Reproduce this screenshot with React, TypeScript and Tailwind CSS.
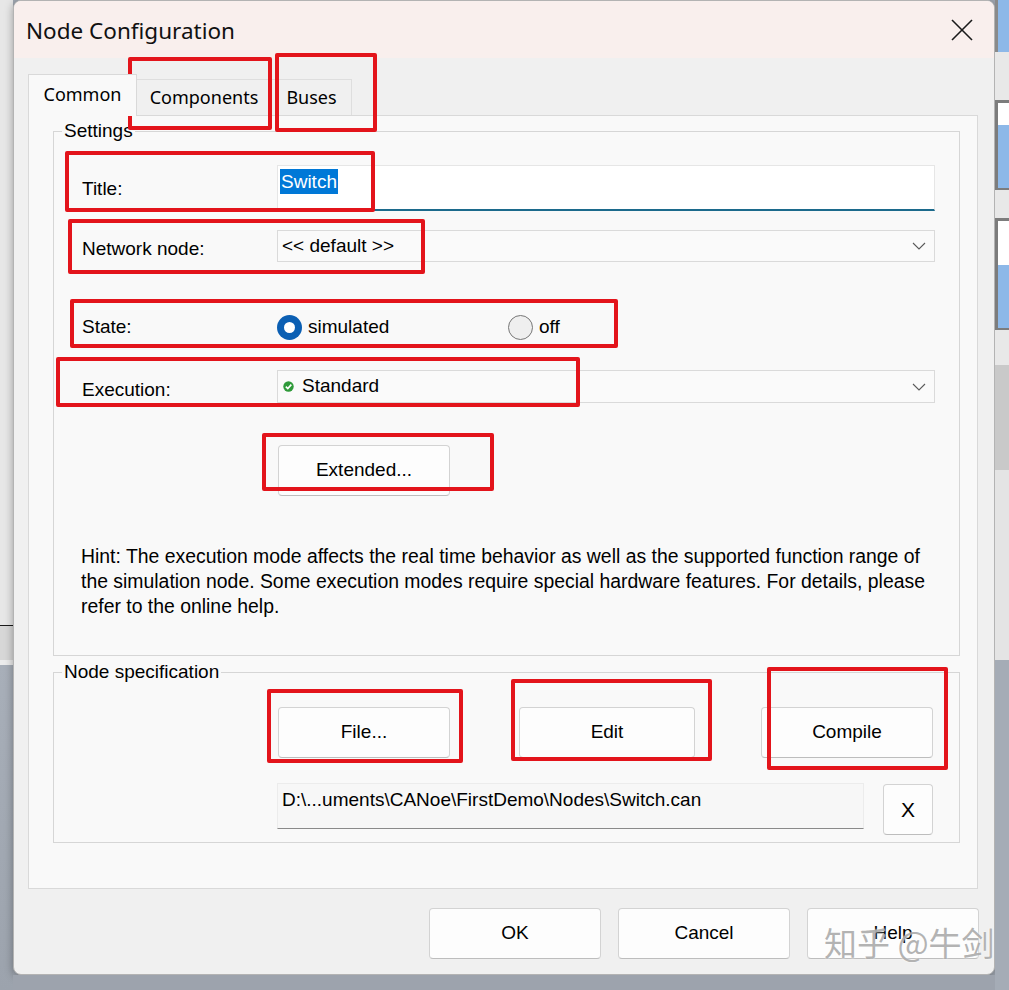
import React from 'react';

const redBoxes = [
  { l: 128, t: 57, w: 144, h: 73 },
  { l: 275, t: 53, w: 102, h: 79 },
  { l: 65, t: 151, w: 310, h: 61 },
  { l: 68, t: 219, w: 357, h: 55 },
  { l: 70, t: 299, w: 548, h: 49 },
  { l: 56, t: 357, w: 524, h: 50 },
  { l: 262, t: 433, w: 232, h: 58 },
  { l: 267, t: 689, w: 196, h: 74 },
  { l: 511, t: 679, w: 201, h: 82 },
  { l: 767, t: 667, w: 181, h: 103 },
];

function Chevron() {
  return (
    <svg width="14" height="8" viewBox="0 0 14 8" fill="none">
      <polyline points="1,1 7,7 13,1" stroke="#5a5a5a" strokeWidth="1.1" />
    </svg>
  );
}

function GreenCheck() {
  return (
    <svg width="11" height="11" viewBox="0 0 11 11">
      <circle cx="5.5" cy="5.5" r="5.2" fill="#2f9a3a" />
      <polyline points="2.8,5.6 4.8,7.6 8.3,3.6" fill="none" stroke="#fff" strokeWidth="1.6" />
    </svg>
  );
}

function WinButton({ label, width, className = '' }: { label: string; width: string; className?: string }) {
  return (
    <div
      className={`${width} h-[51px] flex items-center justify-center rounded-[4px] bg-[#fdfdfd] border border-[#d3d3d3] border-b-[#bdbdbd] text-[19px] text-black ${className}`}
    >
      {label}
    </div>
  );
}

export default function App() {
  return (
    <div className="relative w-[1009px] h-[990px] overflow-hidden flex bg-[#a1a8b2] font-['Liberation_Sans',Arial,sans-serif]">
      {/* Left desktop strip */}
      <div className="w-[13px] flex flex-col shrink-0">
        <div className="h-[625px] bg-[#e7e7e7]" />
        <div className="h-[1px] bg-[#1a1a1a]" />
        <div className="h-[34px] bg-[#d7d7d7]" />
        <div className="h-[5px] bg-[#ececec]" />
        <div className="flex-1 bg-gradient-to-b from-[#a8afb9] to-[#9ca3ad]" />
      </div>

      {/* Dialog column */}
      <div className="w-[982px] flex flex-col shrink-0">
        <div className="h-[975px] flex flex-col rounded-[8px] overflow-hidden border border-[#b3b3b3] bg-[#f0f0f0] shadow-[0_2px_8px_rgba(0,0,0,0.35)]">
          {/* Title bar */}
          <div className="h-[57px] shrink-0 bg-[#f9efed] flex items-center justify-between pl-[12px] pr-[21px]">
            <span className="font-['Noto_Sans',sans-serif] text-[22.5px] text-[#111] pt-[2px]">Node Configuration</span>
            <svg width="22" height="22" viewBox="0 0 22 22" fill="none">
              <line x1="1" y1="1" x2="21" y2="21" stroke="#1a1a1a" strokeWidth="1.6" />
              <line x1="21" y1="1" x2="1" y2="21" stroke="#1a1a1a" strokeWidth="1.6" />
            </svg>
          </div>

          {/* Body */}
          <div className="flex-1 flex flex-col pl-[14px] pt-[16px]">
            {/* Tabs */}
            <div className="flex items-end h-[41px] font-['Noto_Sans',sans-serif] text-[18px] text-black">
              <div className="relative z-10 w-[109px] h-[42px] -mb-px bg-[#f9f9f9] border border-b-0 border-[#d9d9d9] flex items-center justify-center pb-[3px]">
                Common
              </div>
              <div className="w-[135px] h-[36px] bg-[#f0f0f0] border-t border-r border-[#dedede] flex items-center justify-center">
                Components
              </div>
              <div className="w-[80px] h-[36px] bg-[#f0f0f0] border-t border-r border-[#dedede] flex items-center justify-center">
                Buses
              </div>
            </div>

            {/* Tab panel */}
            <div className="w-[950px] h-[774px] bg-[#f9f9f9] border border-[#d9d9d9] px-[24px] pt-[4px] text-[19px] text-black">
              <fieldset className="border border-[#d6d6d6] w-[907px]">
                <legend className="ml-[8px] px-[2px] leading-[22px]">Settings</legend>

                <div className="pt-[23px] pl-[28px] pr-[24px] pb-[36px] flex flex-col">
                  {/* Title */}
                  <div className="h-[46px] flex items-center">
                    <span className="w-[195px] pt-[2px]">Title:</span>
                    <div className="w-[658px] h-[46px] bg-white border border-[#e6e6e6] border-b-2 border-b-[#1c6a8c] pl-[2px] pt-[2px]">
                      <span className="inline-block px-[1px] leading-[25px] bg-[#0078d7] text-white">Switch</span>
                    </div>
                  </div>

                  {/* Network node */}
                  <div className="mt-[19px] h-[32px] flex items-center">
                    <span className="w-[195px] pt-[7px]">Network node:</span>
                    <div className="w-[658px] h-[32px] bg-[#fafafa] border border-[#dadada] flex items-center justify-between pl-[4px] pr-[8px]">
                      <span>&lt;&lt; default &gt;&gt;</span>
                      <Chevron />
                    </div>
                  </div>

                  {/* State */}
                  <div className="mt-[49px] h-[32px] flex items-center">
                    <span className="w-[195px]">State:</span>
                    <div className="flex items-center">
                      <div className="w-[25px] h-[25px] rounded-full bg-[#0b5fb3] flex items-center justify-center">
                        <div className="w-[11px] h-[11px] rounded-full bg-white" />
                      </div>
                      <span className="ml-[6px] w-[200px]">simulated</span>
                      <div className="w-[25px] h-[25px] rounded-full border-[1.5px] border-[#777] bg-[#efefef]" />
                      <span className="ml-[6px]">off</span>
                    </div>
                  </div>

                  {/* Execution */}
                  <div className="mt-[27px] h-[33px] flex items-center">
                    <span className="w-[195px] pt-[7px]">Execution:</span>
                    <div className="w-[658px] h-[33px] bg-[#fafafa] border border-[#dadada] flex items-center justify-between pl-[5px] pr-[8px]">
                      <div className="flex items-center gap-[8px]">
                        <GreenCheck />
                        <span>Standard</span>
                      </div>
                      <Chevron />
                    </div>
                  </div>

                  <WinButton label="Extended..." width="w-[172px]" className="mt-[42px] ml-[196px] h-[50px]" />

                  <p className="mt-[48px] -ml-[1px] text-[19.4px] leading-[25px] whitespace-nowrap">
                    Hint: The execution mode affects the real time behavior as well as the supported function range of
                    <br />
                    the simulation node. Some execution modes require special hardware features. For details, please
                    <br />
                    refer to the online help.
                  </p>
                </div>
              </fieldset>

              <fieldset className="mt-[5px] border border-[#d6d6d6] w-[907px]">
                <legend className="ml-[8px] px-[2px] leading-[22px]">Node specification</legend>
                <div className="pt-[24px] pl-[28px] pr-[24px] pb-[7px] flex flex-col">
                  <div className="flex items-center">
                    <WinButton label="File..." width="w-[172px]" className="ml-[196px]" />
                    <WinButton label="Edit" width="w-[176px]" className="ml-[69px]" />
                    <WinButton label="Compile" width="w-[172px]" className="ml-[66px]" />
                  </div>
                  <div className="mt-[25px] flex items-start">
                    <div className="ml-[195px] w-[587px] h-[46px] bg-[#f7f7f7] border border-[#ececec] border-b-[#8a8a8a] pl-[4px] pt-[3px] leading-[25px]">
                      {'D:\\...uments\\CANoe\\FirstDemo\\Nodes\\Switch.can'}
                    </div>
                    <WinButton label="X" width="w-[50px]" className="ml-[19px] mt-[1px] h-[47px] text-[21px]" />
                  </div>
                </div>
              </fieldset>
            </div>

            {/* Dialog buttons */}
            <div className="mt-[19px] w-[951px] flex justify-end gap-[17px]">
              <WinButton label="OK" width="w-[172px]" className="border-[#1e6a8e] border-b-[#1e6a8e]" />
              <WinButton label="Cancel" width="w-[172px]" />
              <WinButton label="Help" width="w-[172px]" />
            </div>
          </div>
        </div>
        <div className="flex-1 bg-[#9da3ad]" />
      </div>

      {/* Right desktop strip */}
      <div className="w-[14px] flex flex-col shrink-0 bg-[#e8e8e8]">
        <div className="h-[52px] flex">
          <div className="w-[3px] bg-[#8a8a8a]" />
          <div className="flex-1 bg-[#8db8e8]" />
        </div>
        <div className="h-[48px]" />
        <div className="h-[90px] flex border-t-[3px] border-b-[2px] border-[#7c7c7c]">
          <div className="w-[3px] bg-[#7c7c7c]" />
          <div className="flex-1 flex flex-col">
            <div className="h-[22px] bg-white" />
            <div className="flex-1 bg-[#8db8e8]" />
          </div>
        </div>
        <div className="h-[28px]" />
        <div className="h-[112px] flex border-t-[3px] border-b-[2px] border-[#7c7c7c]">
          <div className="w-[3px] bg-[#7c7c7c]" />
          <div className="flex-1 flex flex-col">
            <div className="h-[44px] bg-white" />
            <div className="flex-1 bg-[#8db8e8]" />
          </div>
        </div>
        <div className="h-[35px]" />
        <div className="h-[105px] bg-[#c9c9c9]" />
        <div className="h-[190px] bg-[#e4e4e4]" />
        <div className="flex-1 bg-[#a5acb6]" />
      </div>

      {/* Annotation boxes */}
      {redBoxes.map((b, i) => (
        <div
          key={i}
          className="absolute border-[4px] border-[#e3141b] rounded-[2px]"
          style={{ left: b.l, top: b.t, width: b.w, height: b.h }}
        />
      ))}

      {/* Watermark */}
      <div className="absolute left-[824px] top-[920px] whitespace-nowrap leading-[44px] text-[33px] text-[#9a9a9a]/75 font-['Noto_Sans_CJK_SC',sans-serif] [text-shadow:0_0_2px_#fff]">
        知乎 @牛剑
      </div>
    </div>
  );
}
